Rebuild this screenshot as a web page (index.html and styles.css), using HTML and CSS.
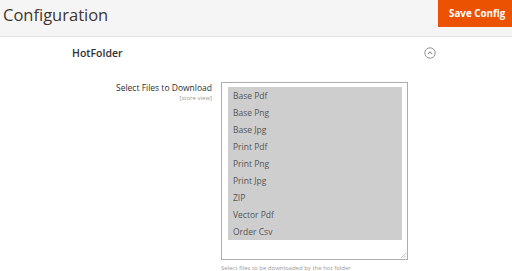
FILE: index.html
```html
<!DOCTYPE html>
<html>
<head>
<meta charset="utf-8">
<link rel="stylesheet" href="styles.css">
</head>
<body>
<header class="page-head">
  <h1 class="title">Configuration</h1>
  <button class="save">Save Config</button>
</header>
<div class="section-head">
  <span class="section-title">HotFolder</span>
  <svg class="toggle" width="12" height="12" viewBox="0 0 12 12">
    <circle cx="6" cy="6" r="5.2" fill="none" stroke="#8a8a8a" stroke-width="0.9"/>
    <path d="M3.8 7 L6 4.8 L8.2 7" fill="none" stroke="#666" stroke-width="0.9"/>
  </svg>
</div>
<div class="row">
  <div class="label">
    <div class="label-text">Select Files to Download</div>
    <div class="scope">[store view]</div>
  </div>
  <div class="control">
    <div class="multiselect">
      <div class="options">
        <div class="opt">Base Pdf</div>
        <div class="opt">Base Png</div>
        <div class="opt">Base Jpg</div>
        <div class="opt">Print Pdf</div>
        <div class="opt">Print Png</div>
        <div class="opt">Print Jpg</div>
        <div class="opt">ZIP</div>
        <div class="opt">Vector Pdf</div>
        <div class="opt">Order Csv</div>
      </div>
      <svg class="grip" width="6" height="6" viewBox="0 0 6 6">
        <path d="M1 6 L6 1 M3.5 6 L6 3.5" stroke="#aaa" stroke-width="0.7"/>
      </svg>
    </div>
    <div class="note">Select files to be downloaded by the hot folder</div>
  </div>
</div>
</body>
</html>
```

FILE: styles.css
```css
html, body {
  margin: 0;
  padding: 0;
  background: #fff;
  font-family: "Open Sans", "Liberation Sans", sans-serif;
  overflow: hidden;
  width: 512px;
  height: 271px;
}
.page-head {
  display: flex;
  justify-content: space-between;
  align-items: flex-start;
  height: 36px;
  background: #f5f5f5;
  border-bottom: 1px solid #e3e3e3;
}
.title {
  margin: 0;
  padding: 2px 0 0 3px;
  font-size: 16.5px;
  font-weight: 400;
  color: #41362f;
  line-height: 26px;
}
.save {
  width: 74px;
  height: 27px;
  border: 0;
  background: #eb5202;
  color: #fff;
  font-family: "Open Sans", "Liberation Sans", sans-serif;
  font-weight: 700;
  font-size: 9.8px;
  padding: 0 0 0 11px;
  text-align: left;
  margin-left: auto;
}
.section-head {
  display: flex;
  justify-content: space-between;
  align-items: center;
  margin: 9px 0 0 72px;
  width: 364px;
  height: 14px;
}
.section-title {
  font-size: 10.5px;
  font-weight: 600;
  color: #303030;
}
.toggle {
  display: block;
}
.row {
  display: grid;
  grid-template-columns: 212px 187px;
  column-gap: 9px;
  margin-top: 22px;
}
.label {
  text-align: right;
}
.label-text {
  font-size: 8.5px;
  font-weight: 400;
  color: #303030;
  line-height: 12px;
}
.scope {
  font-size: 6px;
  color: #999;
  line-height: 8px;
}
.multiselect {
  position: relative;
  height: 178px;
  border: 1px solid #adadad;
  box-sizing: border-box;
  padding: 4px 5px 0 6px;
}
.options {
  background: #cecece;
}
.opt {
  height: 17px;
  line-height: 17px;
  padding-left: 5px;
  font-size: 8.5px;
  color: #555;
}
.grip {
  position: absolute;
  right: 1px;
  bottom: 1px;
}
.note {
  margin-top: 4px;
  font-size: 6px;
  color: #999;
  line-height: 8px;
}
```
